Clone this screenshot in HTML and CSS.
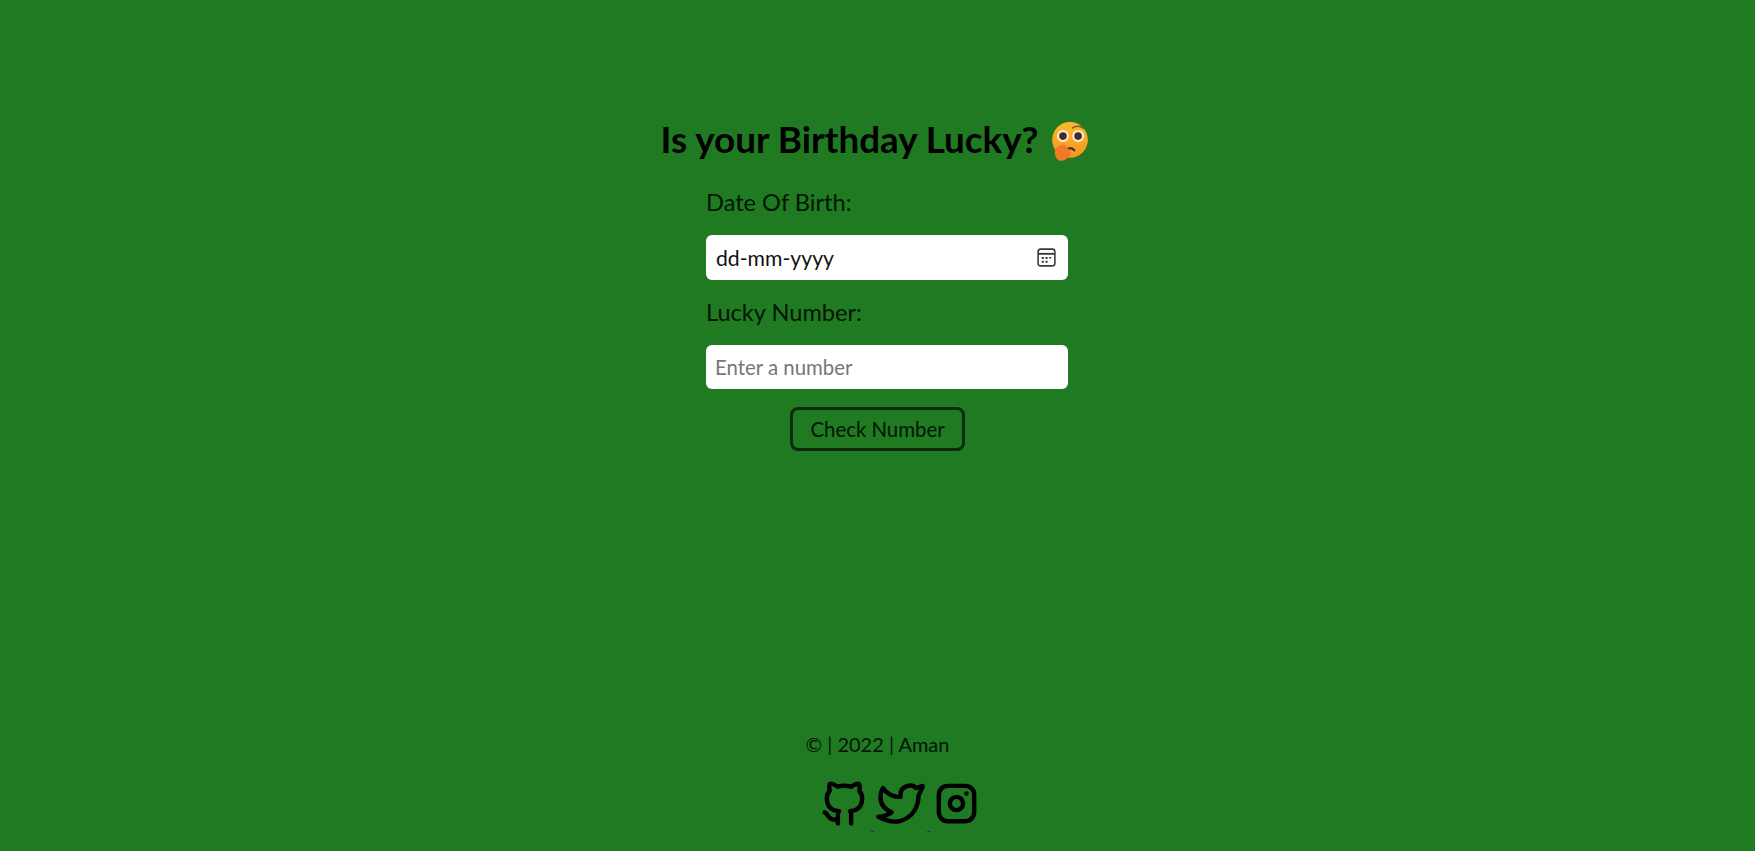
FILE: index.html
```html
<!DOCTYPE html>
<html lang="en">
<head>
  <meta charset="UTF-8">
  <meta name="viewport" content="width=device-width, initial-scale=1.0">
  <title>Is your Birthday Lucky?</title>
  <link rel="stylesheet" href="styles.css">
</head>
<body>
  <main class="main-content">
    <h1 class="title">Is your Birthday Lucky?
      <svg class="emoji" viewBox="0 0 33 36" aria-hidden="true">
        <defs>
          <linearGradient id="face" x1="0" y1="0" x2="0" y2="1">
            <stop offset="0" stop-color="#fcb92f"/>
            <stop offset="1" stop-color="#f6951f"/>
          </linearGradient>
        </defs>
        <circle cx="16.500" cy="16.500" r="16.500" fill="url(#face)"/>
        <circle cx="10" cy="13" r="5.600" fill="#ffe9c4"/>
        <circle cx="24" cy="13" r="5.600" fill="#ffe9c4"/>
        <circle cx="10" cy="13" r="3.500" fill="#3a2b35"/>
        <circle cx="24" cy="13" r="3.500" fill="#3a2b35"/>
        <path d="M19 5.500c2.500-2 7-2.200 9.500.3" fill="none" stroke="#7d5a35" stroke-width="1.500" stroke-linecap="round"/>
        <path d="M13.500 26.500c1.500-3 5-3.200 7-.3" fill="none" stroke="#4a2d22" stroke-width="2" stroke-linecap="round"/>
        <path d="M2.500 27c.5-2.500 2.500-4.500 4.500-5.500 2-1 4-1 5 .2 1.500 1.500 3.500 3.500 4.500 5.500 1 2.500-.5 5-3 6.800-2.500 1.800-5.500 2.500-7.500 1.200C3 33.500 2 30 2.500 27z" fill="#ef7a28"/>
      </svg>
    </h1>
    <div class="field">
      <label class="field-label" for="dob">Date Of Birth:</label>
      <div class="date-input">
        <input type="text" id="dob" value="dd-mm-yyyy">
        <svg class="calendar-icon" viewBox="0 0 20 20" aria-hidden="true">
          <rect x="2" y="2" width="16" height="16" rx="2.500" fill="none" stroke="#3a3a3a" stroke-width="1.500"/>
          <path d="M2 6.500h16" stroke="#3a3a3a" stroke-width="1.800"/>
          <path d="M5.500 9.500h2v2h-2zM9 9.500h2v2H9zM12.500 9.500h2v1.500h-2zM5.500 13h2v2h-2zM9 13h2v2H9z" fill="#3a3a3a"/>
        </svg>
      </div>
    </div>
    <div class="field">
      <label class="field-label" for="lucky">Lucky Number:</label>
      <input class="number-input" type="text" id="lucky" placeholder="Enter a number">
    </div>
    <button class="check-button">Check Number</button>
  </main>
  <footer class="footer">
    <p class="copyright">© | 2022 | Aman</p>
    <div class="social-links">
      <a href="#"><svg class="social-icon" viewBox="0 0 24 24"><path d="M9 19c-4.300 1.400-4.300-2.500-6-3m12 5v-3.500c0-1 .1-1.400-.5-2c2.800-.3 5.500-1.400 5.500-6a4.600 4.600 0 0 0-1.300-3.200a4.200 4.200 0 0 0-.1-3.200s-1.100-.3-3.500 1.300a12.300 12.300 0 0 0-6.200 0c-2.400-1.600-3.500-1.300-3.500-1.300a4.200 4.200 0 0 0-.1 3.200a4.600 4.600 0 0 0-1.300 3.200c0 4.600 2.700 5.700 5.500 6c-.6 .6-.6 1.200-.5 2v3.500"/></svg> </a>
      <a href="#"><svg class="social-icon" viewBox="0 0 24 24"><path d="M22 4.010c-1 .49-1.980 .689-3 .99c-1.121-1.265-2.783-1.335-4.380-.737s-2.643 2.060-2.620 3.737v1c-3.245 .083-6.135-1.395-8-4c0 0-4.182 7.433 4 11c-1.872 1.247-3.739 2.088-6 2c3.308 1.803 6.913 2.740 10.034 1.846c3.580-1.040 6.522-3.723 7.651-7.742a13.840 13.840 0 0 0 .497-3.753c-.002-.249 1.510-2.772 1.818-4.013z"/></svg> </a>
      <a href="#"><svg class="social-icon" viewBox="0 0 24 24"><rect x="4" y="4" width="16" height="16" rx="4"/><circle cx="12" cy="12" r="3"/><path d="M16.500 7.500v.01"/></svg></a>
    </div>
  </footer>
</body>
</html>
```

FILE: styles.css
```css
/* Reset some default styles */
body, h1, p {
  margin: 0;
  padding: 0;
}

/* Main styles */
body {
  font-family: Lato, sans-serif;
  font-size: 20.4px;
  background-color: #1f7a21;
  color: #000;
  display: flex;
  flex-direction: column;
  min-height: 100vh;
}

.main-content {
  display: flex;
  flex-direction: column;
  align-items: center;
  padding-top: 114px;
}

.title {
  font-size: 36.8px;
  font-weight: 700;
  line-height: 50px;
  margin-bottom: 25px;
  white-space: nowrap;
}

.emoji {
  width: 36px;
  height: 39px;
  margin: 0 6px 0 5px;
  vertical-align: -8px;
}

.field {
  width: 362px;
  margin-left: 19px;
  margin-bottom: 19px;
}

.field-label {
  display: block;
  font-size: 23.6px;
  line-height: 27px;
  margin-bottom: 19px;
  color: #031503;
}

.date-input {
  display: flex;
  align-items: center;
  height: 45px;
  padding: 0 11px 0 10px;
  background-color: #fff;
  border-radius: 6px;
}

.date-input input {
  flex-grow: 1;
  min-width: 0;
  border: none;
  outline: none;
  padding: 0;
  font: inherit;
  font-size: 21.2px;
  color: #111;
}

.calendar-icon {
  width: 21px;
  height: 21px;
}

.number-input {
  display: block;
  box-sizing: border-box;
  width: 100%;
  height: 44px;
  padding: 0 9px;
  border: none;
  border-radius: 6px;
  background-color: #fff;
  font: inherit;
}

.number-input::placeholder {
  color: #777;
}

.check-button {
  width: 175px;
  height: 44px;
  margin-top: -1px;
  background: transparent;
  border: 3px solid #0c2c0d;
  border-radius: 8px;
  color: #031503;
  font: inherit;
}

.footer {
  margin-top: auto;
  text-align: center;
  padding-bottom: 19px;
}

.copyright {
  font-size: 20px;
  line-height: 27px;
  margin-bottom: 19px;
  color: #031503;
}

.social-links {
  font-size: 13px;
  line-height: 1;
  padding-left: 46px;
}

.social-links a {
  color: #334;
}

.social-icon {
  width: 53px;
  height: 53px;
  fill: none;
  stroke: #000;
  stroke-width: 2;
  stroke-linecap: round;
  stroke-linejoin: round;
}
```
